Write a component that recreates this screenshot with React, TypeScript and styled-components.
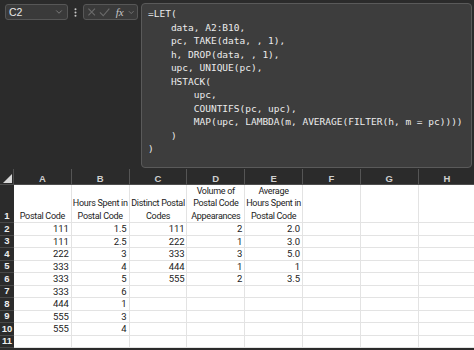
import React from 'react';
import styled, { createGlobalStyle } from 'styled-components';
import { ChevronDown, EllipsisVertical } from 'lucide-react';

const GlobalStyle = createGlobalStyle`
  html, body {
    margin: 0;
    padding: 0;
    background: #2b2b2b;
  }
`;

const FORMULA = `=LET(
    data, A2:B10,
    pc, TAKE(data, , 1),
    h, DROP(data, , 1),
    upc, UNIQUE(pc),
    HSTACK(
        upc,
        COUNTIFS(pc, upc),
        MAP(upc, LAMBDA(m, AVERAGE(FILTER(h, m = pc))))
    )
)`;

const COLUMNS = ['A', 'B', 'C', 'D', 'E', 'F', 'G', 'H'];

// header text of row 1, split where the sheet wraps it
const HEADINGS: string[][] = [
  ['Postal Code'],
  ['Hours Spent in', 'Postal Code'],
  ['Distinct Postal', 'Codes'],
  ['Volume of', 'Postal Code', 'Appearances'],
  ['Average', 'Hours Spent in', 'Postal Code'],
];

const ROWS: string[][] = [
  ['111', '1.5', '111', '2', '2.0'],
  ['111', '2.5', '222', '1', '3.0'],
  ['222', '3', '333', '3', '5.0'],
  ['333', '4', '444', '1', '1'],
  ['333', '5', '555', '2', '3.5'],
  ['333', '6'],
  ['444', '1'],
  ['555', '3'],
  ['555', '4'],
  [],
];

export default function App() {
  return (
    <>
      <GlobalStyle />
      <Page>
        <FormulaBar>
          <Controls>
            <NameBox>
              <span>C2</span>
              <ChevronDown size={10} strokeWidth={1.6} color="#9a9a9a" />
            </NameBox>
            <Dots>
              <EllipsisVertical size={11} strokeWidth={2.4} color="#c8c8c8" />
            </Dots>
            <ActionBox>
              <svg width="10" height="10" viewBox="0 0 10 10">
                <path d="M1.5 1.5 L8.5 8.5 M8.5 1.5 L1.5 8.5" stroke="#6b6b6b" strokeWidth="1.2" fill="none" />
              </svg>
              <svg width="12" height="10" viewBox="0 0 12 10">
                <path d="M1 5.5 L4.5 9 L11 1.5" stroke="#6b6b6b" strokeWidth="1.2" fill="none" />
              </svg>
              <Fx>fx</Fx>
              <ChevronDown size={9} strokeWidth={1.6} color="#9a9a9a" />
            </ActionBox>
          </Controls>
          <FormulaBox>{FORMULA}</FormulaBox>
        </FormulaBar>

        <Sheet>
          <Corner>
            <svg width="9" height="9" viewBox="0 0 9 9">
              <path d="M9 0 L9 9 L0 9 Z" fill="#d8d8d8" />
            </svg>
          </Corner>
          {COLUMNS.map((c) => (
            <ColHeader key={c}>{c}</ColHeader>
          ))}

          <RowHeader>1</RowHeader>
          {COLUMNS.map((c, i) => (
            <HeadingCell key={c}>
              {(HEADINGS[i] ?? []).map((line) => (
                <span key={line}>{line}</span>
              ))}
            </HeadingCell>
          ))}

          {ROWS.map((row, r) => (
            <React.Fragment key={r}>
              <RowHeader>{r + 2}</RowHeader>
              {COLUMNS.map((c, i) => (
                <Cell key={c}>{row[i] ?? ''}</Cell>
              ))}
            </React.Fragment>
          ))}
        </Sheet>
      </Page>
    </>
  );
}

const Page = styled.div`
  width: 474px;
  height: 350px;
  overflow: hidden;
  background: #2b2b2b;
  display: flex;
  flex-direction: column;
  font-family: Roboto, 'Liberation Sans', Arial, sans-serif;
`;

const FormulaBar = styled.div`
  height: 169px;
  padding: 3px 2px 1px 5px;
  box-sizing: border-box;
  display: flex;
  gap: 3px;
  flex-shrink: 0;
`;

const Controls = styled.div`
  display: flex;
  align-items: flex-start;
  padding-top: 1px;
  gap: 2px;
`;

const NameBox = styled.div`
  width: 63px;
  height: 16px;
  box-sizing: border-box;
  border: 1px solid #575757;
  border-radius: 3px;
  background: #3a3a3a;
  display: flex;
  align-items: center;
  justify-content: space-between;
  padding: 0 3px;
  color: #e8e8e8;
  font-family: 'Liberation Sans', Arial, sans-serif;
  font-size: 10.5px;
`;

const Dots = styled.div`
  width: 11px;
  height: 16px;
  display: flex;
  align-items: center;
  justify-content: center;
`;

const ActionBox = styled.div`
  width: 55px;
  height: 16px;
  box-sizing: border-box;
  border: 1px solid #575757;
  border-radius: 3px;
  background: #3a3a3a;
  display: flex;
  align-items: center;
  gap: 3px;
  padding: 0 2px 0 3px;
`;

const Fx = styled.span`
  font-family: 'Liberation Serif', serif;
  font-style: italic;
  font-size: 11px;
  color: #c8c8c8;
  margin-left: 2px;
  margin-top: -1px;
`;

const FormulaBox = styled.pre`
  flex: 1;
  margin: 0;
  height: 165px;
  box-sizing: border-box;
  border: 1px solid #5a5a5a;
  border-radius: 4px;
  background: #3d3d3d;
  padding: 3px 6px;
  color: #ececec;
  font-family: 'DejaVu Sans Mono', 'Liberation Mono', monospace;
  font-size: 9.5px;
  line-height: 13.5px;
  overflow: hidden;
`;

const Sheet = styled.div`
  display: grid;
  grid-template-columns: 14px repeat(8, 57.8px);
  grid-template-rows: 16px 38px repeat(10, 12.5px);
  background: #ffffff;
`;

const Corner = styled.div`
  background: #2b2b2b;
  border-right: 1px solid #4e4e4e;
  border-bottom: 1px solid #4e4e4e;
  box-sizing: border-box;
  display: flex;
  align-items: flex-end;
  justify-content: flex-end;
  padding: 0 1px 1px 0;
`;

const ColHeader = styled.div`
  background: #2b2b2b;
  border-right: 1px solid #555555;
  border-bottom: 1px solid #4e4e4e;
  box-sizing: border-box;
  color: #cfcfcf;
  font-family: 'Liberation Sans', Arial, sans-serif;
  font-weight: bold;
  font-size: 9.5px;
  display: flex;
  align-items: center;
  justify-content: center;
  padding-top: 3px;
`;

const RowHeader = styled.div`
  background: #2b2b2b;
  border-bottom: 1px solid #484848;
  box-sizing: border-box;
  color: #ededed;
  font-family: 'Liberation Sans', Arial, sans-serif;
  font-weight: bold;
  font-size: 9.5px;
  display: flex;
  align-items: flex-end;
  justify-content: center;
  padding-bottom: 1px;
`;

const Cell = styled.div`
  border-right: 1px solid #e3e3e3;
  border-bottom: 1px solid #e3e3e3;
  box-sizing: border-box;
  color: #222222;
  font-size: 9.5px;
  letter-spacing: -0.1px;
  line-height: 12px;
  text-align: right;
  padding-right: 2px;
  white-space: nowrap;
`;

const HeadingCell = styled(Cell)`
  display: flex;
  flex-direction: column;
  align-items: center;
  justify-content: flex-end;
  font-size: 9px;
  letter-spacing: -0.3px;
  line-height: 12.5px;
  padding: 0;
`;
